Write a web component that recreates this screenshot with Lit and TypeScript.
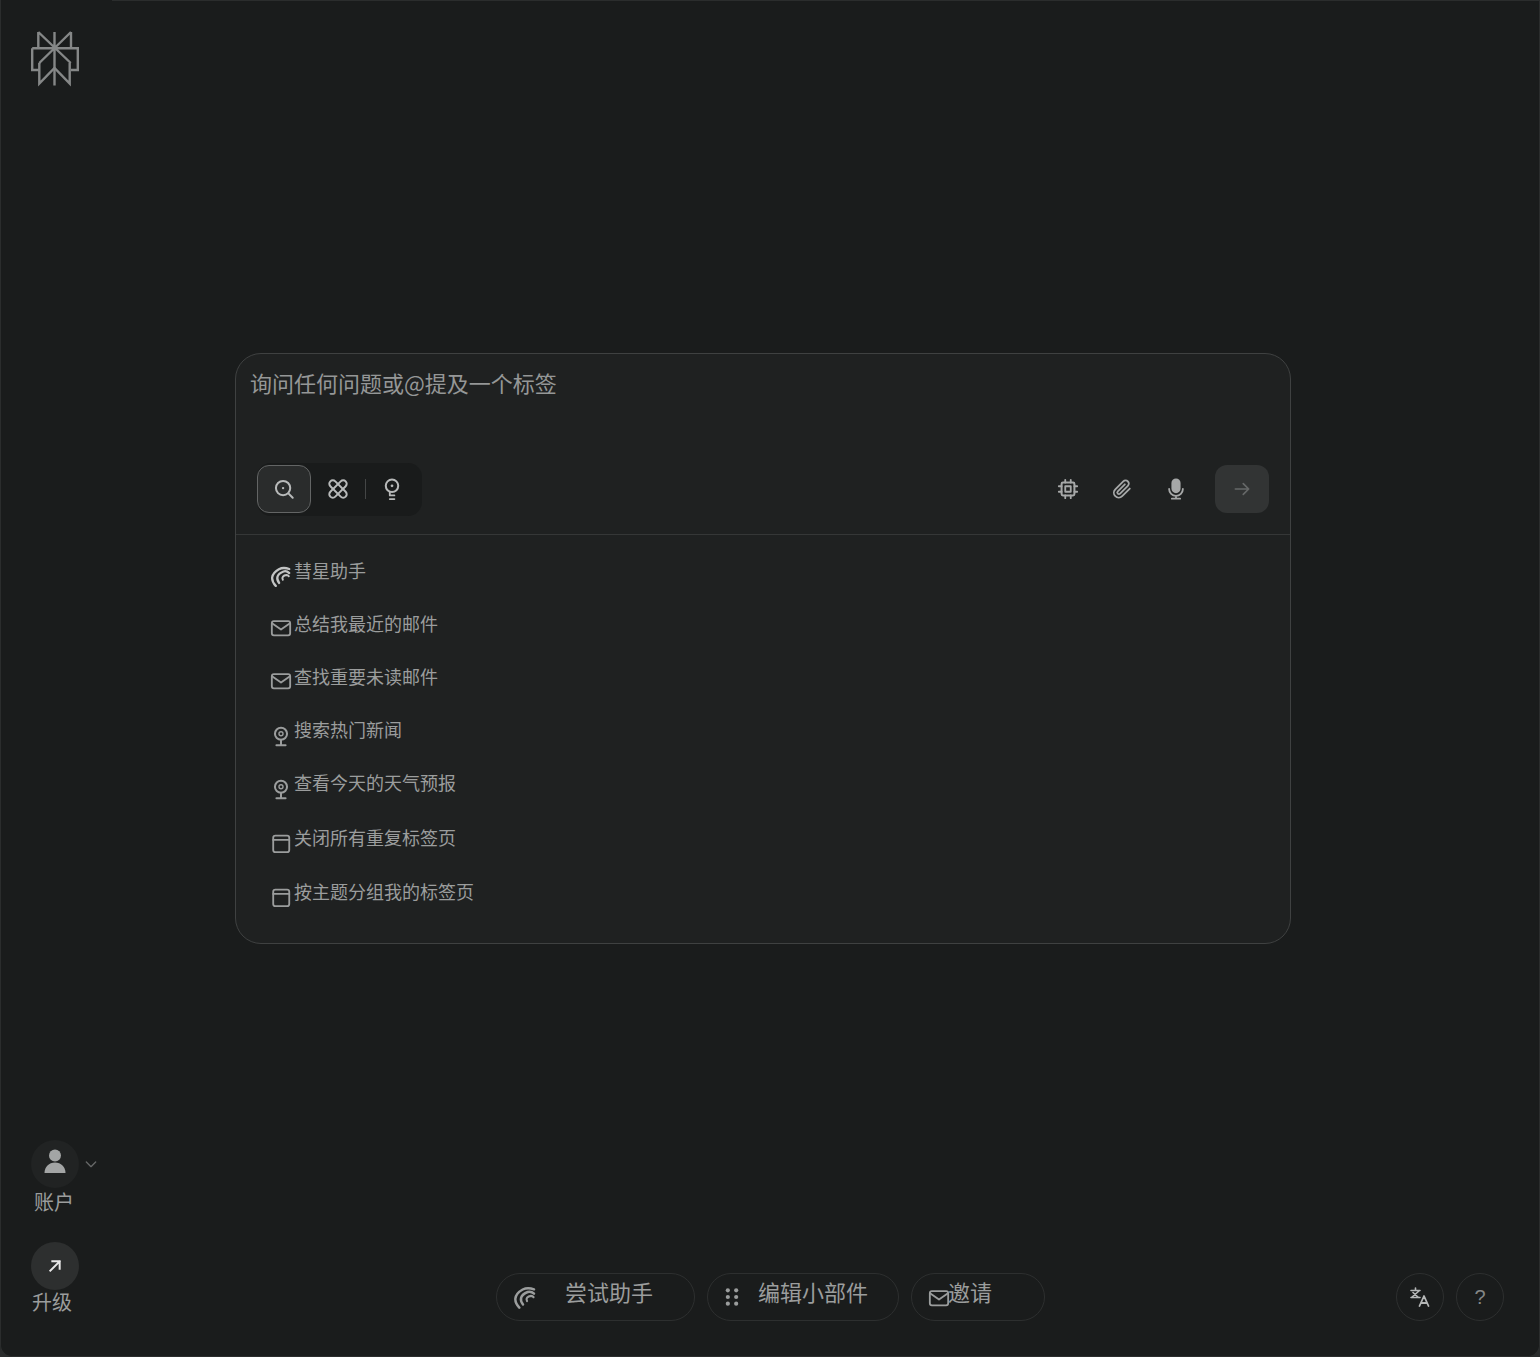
import { LitElement, html, css, svg } from "lit";
import { customElement } from "lit/decorators.js";

const icon = (size: number, body: unknown, cls = "") =>
  html`<svg class="ic ${cls}" width=${size} height=${size} viewBox="0 0 24 24" fill="none" stroke="currentColor" stroke-width="2" stroke-linecap="round" stroke-linejoin="round">${body}</svg>`;

const comet = svg`<path d="M6.300 21.700C1 16 0 9 9.700 3.500C13 1.800 17 1.800 21 3.300" stroke-width="2.500"/><path d="M10 18.500C6.500 14 7 9 14.700 6C17 5.200 19 5.800 21 7.700" stroke-width="2.500"/><path d="M14 15C12.500 12.500 14.500 10.200 18 9.900C19 9.900 20 10.400 20.500 11.200" stroke-width="2.200"/>`;
const mail = svg`<rect x="2" y="4.500" width="20" height="15.500" rx="2.200"/><path d="M2.600 7l9.400 6.600L21.400 7"/>`;
const globe = svg`<circle cx="12" cy="9.500" r="6.600" stroke-width="2.200"/><circle cx="12" cy="9.500" r="2.200" stroke-width="1.500"/><path d="M12 16v6M7 22h10" stroke-width="2.200"/>`;
const tab = svg`<rect x="3.500" y="4" width="17.500" height="18" rx="2.400"/><path d="M3.500 8.600h17.500"/>`;
const search = svg`<circle cx="11" cy="11" r="7.800" stroke-width="2.200"/><circle cx="11" cy="11" r="1.300" fill="currentColor" stroke="none"/><path d="M16.800 16.800l4.700 4.700" stroke-width="2.200"/>`;
const atom = svg`<rect x="-1" y="7.800" width="26" height="8.400" rx="4.200" stroke-width="2.400" transform="rotate(45 12 12)"/><rect x="-1" y="7.800" width="26" height="8.400" rx="4.200" stroke-width="2.400" transform="rotate(-45 12 12)"/>`;
const bulb = svg`<circle cx="12" cy="8.500" r="6.800" stroke-width="2.200"/><circle cx="12" cy="8.500" r="1.500" fill="currentColor" stroke="none"/><path d="M9.600 15v4h5M9.600 23h5" stroke-width="2"/>`;
const chip = svg`<rect x="5" y="5" width="14" height="14" rx="1.500" stroke-width="2.200"/><rect x="9" y="9" width="6" height="6"/><path d="M9 2v3M15 2v3M9 19v3M15 19v3M2 9h3M2 15h3M19 9h3M19 15h3"/>`;
const clip = svg`<path d="M20.500 11.500l-8.300 8.300a5.300 5.300 0 0 1-7.500-7.500l8.700-8.700a3.500 3.500 0 0 1 5 5l-8.500 8.500a1.700 1.700 0 0 1-2.500-2.500l7.700-7.700"/>`;
const mic = svg`<rect x="8" y="1.500" width="8" height="14" rx="4" fill="currentColor"/><path d="M4.500 12a7.500 7.500 0 0 0 15 0M12 19.500v3M7.500 22.500h9"/>`;
const arrow = svg`<path d="M4 12h16M13.500 5.500L20 12l-6.500 6.500"/>`;
const person = svg`<circle cx="12" cy="6.500" r="6" fill="currentColor" stroke="none"/><path d="M1.500 24c0-6 4.500-10.500 10.500-10.500S22.500 18 22.500 24z" fill="currentColor" stroke="none"/>`;
const chev = svg`<path d="M5 9l7 7 7-7"/>`;
const upArrow = svg`<path d="M5 19L19 5M8 5h11v11" stroke-width="3" stroke-linecap="square" stroke-linejoin="miter"/>`;
const dots = svg`<g fill="currentColor" stroke="none"><circle cx="7" cy="4" r="2.500"/><circle cx="17" cy="4" r="2.500"/><circle cx="7" cy="12" r="2.500"/><circle cx="17" cy="12" r="2.500"/><circle cx="7" cy="20" r="2.500"/><circle cx="17" cy="20" r="2.500"/></g>`;
const translate = svg`<path d="M3 5.500h9M7.500 3v2.500M3.500 12.500l8-7M5 7.500l5.500 5M3 12.500h9" stroke-width="1.600"/><path d="M11.500 21L16 11l4.500 10M13 18h6" stroke-width="1.800"/>`;

const rows: [unknown, string, string, boolean][] = [
  [comet, "c", "彗星助手", false],
  [mail, "m", "总结我最近的邮件", false],
  [mail, "m", "查找重要未读邮件", false],
  [globe, "g", "搜索热门新闻", false],
  [globe, "g", "查看今天的天气预报", true],
  [tab, "t", "关闭所有重复标签页", true],
  [tab, "t", "按主题分组我的标签页", false],
];

@customElement("app-root")
export class AppRoot extends LitElement {
  static styles = css`
    :host {
      display: block;
      width: 1540px;
      height: 1357px;
      background: #2a2c2c;
      font-family: "Noto Sans CJK SC", "Liberation Sans", sans-serif;
      color: #9b9d9d;
    }
    svg { display: block; flex: none; }
    .window {
      height: 100%;
      box-sizing: border-box;
      display: flex;
      background: #1a1c1c;
      border-left: 1px solid #2b2d2d;
      border-bottom: 1px solid #2b2d2d;
      border-right: 1px solid #2b2d2d;
      border-radius: 0 0 12px 12px;
    }
    .side {
      width: 111px;
      flex: none;
      box-sizing: border-box;
      padding: 29px 0 41px 30px;
      display: flex;
      flex-direction: column;
      align-items: flex-start;
    }
    .logo { color: #858787; }
    .spacer { flex: 1; }
    .acct { display: flex; align-items: center; gap: 4px; }
    .circle {
      width: 48px; height: 48px; border-radius: 50%;
      display: flex; align-items: center; justify-content: center;
    }
    .user { background: #212323; color: #a3a5a5; }
    .user .ic { margin-bottom: 6px; }
    .up { background: #2d2f2f; color: #e8e8e8; }
    .chev { color: #666868; }
    .lab { font-size: 20px; line-height: 26px; color: #9b9d9d; }
    .lab.a { margin: 1px 0 27px 3px; }
    .lab.b { margin: -1px 0 0 1px; }
    .main {
      flex: 1;
      display: flex;
      flex-direction: column;
      border-top: 1px solid #2b2d2d;
      padding-top: 352px;
      min-width: 0;
    }
    .composer {
      width: 1056px;
      height: 591px;
      box-sizing: border-box;
      margin-left: 123px;
      background: #1f2121;
      border: 1px solid #3f4141;
      border-radius: 26px;
      display: flex;
      flex-direction: column;
    }
    .input {
      height: 108px;
      box-sizing: border-box;
      padding: 12px 0 0 14px;
      font-size: 22px;
      line-height: 32px;
      color: #959797;
    }
    .tools {
      height: 73px;
      box-sizing: border-box;
      padding: 1px 21px 0 21px;
      display: flex;
      align-items: flex-start;
      justify-content: space-between;
      border-bottom: 1px solid #353737;
    }
    .seg {
      width: 165px; height: 53px; box-sizing: border-box;
      padding-bottom: 2px;
      background: #191b1b; border-radius: 14px;
      display: flex; align-items: center; color: #b8baba;
    }
    .tbtn { width: 54px; height: 48px; display: flex; align-items: center; justify-content: center; box-sizing: border-box; }
    .tbtn.on { background: #2a2c2c; border: 1px solid #636565; border-radius: 12px; }
    .sep { width: 1px; height: 20px; background: #444646; }
    .tbtn.bulb { width: 52px; }
    .right { display: flex; align-items: center; margin-top: 2px; color: #a6a8a8; }
    .send { width: 54px; height: 48px; margin-left: 12px; background: #323434; border-radius: 12px; display: flex; align-items: center; justify-content: center; color: #666868; }
    .list { padding: 17px 0 0 34px; display: flex; flex-direction: column; }
    .row { display: flex; gap: 2px; height: 53px; font-size: 18px; line-height: 36px; color: #9b9d9d; }
    .row.tall { height: 54.500px; }
    .row .ic { color: #9b9d9d; }
    .row .c { margin-top: 14px; color: #c2c4c4; }
    .row .m { margin-top: 11.500px; }
    .row .g { margin-top: 14px; }
    .row .t { margin-top: 13px; }
    .foot {
      margin-top: auto;
      display: flex;
      align-items: center;
      padding: 0 35px 35px 384px;
    }
    .pills { display: flex; gap: 12px; }
    .pill {
      height: 48px; box-sizing: border-box;
      border: 1px solid #2d2f2f; border-radius: 24px;
      display: flex; align-items: center;
      font-size: 22px; line-height: 32px; color: #9b9d9d;
    }
    .pill span { margin-bottom: 12px; }
    .p1 { width: 199px; padding-left: 16px; gap: 28px; }
    .p2 { width: 192px; padding-left: 14px; gap: 16px; }
    .p3 { width: 134px; padding-left: 16px; }
    .p3 span { margin-left: -2px; }
    .p1 .ic { margin-top: 2px; }
    .p3 .ic { margin-top: 2px; }
    .round { display: flex; gap: 12px; margin-left: auto; }
    .rbtn {
      width: 48px; height: 48px; box-sizing: border-box;
      border: 1px solid #2d2f2f; border-radius: 50%;
      display: flex; align-items: center; justify-content: center;
      color: #b5b7b7;
      font: 20px "Liberation Sans", sans-serif;
    }
    .rbtn.q { color: #858787; }
  `;

  render() {
    return html`<div class="window">
      <aside class="side">
        <svg class="logo" width="50" height="58" viewBox="0 0 50 58" fill="none" stroke="currentColor" stroke-width="2.400" stroke-linejoin="miter">
          <path d="M23.500 3v53.500M7.300 3v16.300M40 3v16.300M7.300 3l32.400 31M40 3L8.300 34"/>
          <path d="M1.200 19.300h45.600v21.700H40M1.200 19.300v21.700h7.100M8.300 34v20.500l15.200-15.500 15.200 15.500V34" />
        </svg>
        <div class="spacer"></div>
        <div class="acct">
          <div class="circle user">${icon(24, person)}</div>
          ${icon(16, chev, "chev")}
        </div>
        <div class="lab a">账户</div>
        <div class="circle up">${icon(16, upArrow)}</div>
        <div class="lab b">升级</div>
      </aside>
      <main class="main">
        <section class="composer">
          <div class="input">询问任何问题或@提及一个标签</div>
          <div class="tools">
            <div class="seg">
              <div class="tbtn on">${icon(22, search)}</div>
              <div class="tbtn">${icon(20, atom)}</div>
              <div class="sep"></div>
              <div class="tbtn bulb">${icon(22, bulb)}</div>
            </div>
            <div class="right">
              <div class="tbtn">${icon(22, chip)}</div>
              <div class="tbtn">${icon(22, clip)}</div>
              <div class="tbtn">${icon(22, mic)}</div>
              <div class="send">${icon(20, arrow)}</div>
            </div>
          </div>
          <div class="list">
            ${rows.map(([i, k, t, tall]) => html`<div class="row ${tall ? "tall" : ""}">${icon(22, i, k)}<span>${t}</span></div>`)}
          </div>
        </section>
        <footer class="foot">
          <div class="pills">
            <div class="pill p1">${icon(24, comet)}<span>尝试助手</span></div>
            <div class="pill p2">${icon(20, dots)}<span>编辑小部件</span></div>
            <div class="pill p3">${icon(22, mail)}<span>邀请</span></div>
          </div>
          <div class="round">
            <div class="rbtn">${icon(24, translate)}</div>
            <div class="rbtn q">?</div>
          </div>
        </footer>
      </main>
    </div>`;
  }
}
